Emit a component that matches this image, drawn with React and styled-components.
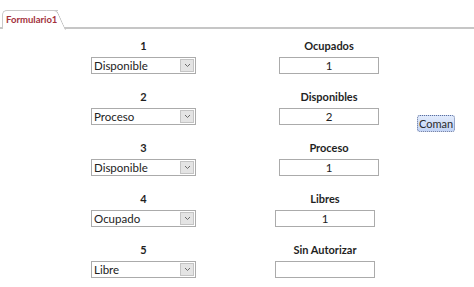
import styled, { createGlobalStyle } from "styled-components";

const GlobalStyle = createGlobalStyle`
  body {
    margin: 0;
    background: #ffffff;
    font-family: Lato, "Liberation Sans", sans-serif;
  }
`;

const Page = styled.div`
  width: 474px;
  height: 287px;
  overflow: hidden;
  background: #fff;
`;

const TabBar = styled.div`
  height: 27px;
  border-bottom: 2px solid #c6c6c6;
  display: flex;
  align-items: flex-end;
  padding-left: 2px;
`;

const Tab = styled.div`
  position: relative;
  height: 18px;
  padding: 0 1px 0 3px;
  margin-bottom: -2px;
  border: 1px solid #c9c9c9;
  border-right: none;
  border-bottom: none;
  border-top-left-radius: 5px;
  background: #fff;
  font-size: 9.5px;
  font-weight: 700;
  color: #a3313c;
  line-height: 18px;

  &::after {
    content: "";
    position: absolute;
    top: -1px;
    right: -8px;
    width: 10px;
    height: 19px;
    border-top: 1px solid #c9c9c9;
    border-right: 1px solid #b9b9b9;
    border-top-right-radius: 4px;
    transform: skewX(24deg);
    transform-origin: bottom left;
    background: #fff;
    z-index: 0;
  }
`;

const TabText = styled.span`
  position: relative;
  z-index: 1;
`;

const Body = styled.div`
  display: flex;
  padding: 10px 0 0 91px;
`;

const Column = styled.div`
  display: flex;
  flex-direction: column;
  width: ${(p) => p.$width}px;
  margin-left: ${(p) => p.$offset || 0}px;
`;

const Field = styled.div`
  display: flex;
  flex-direction: column;
  height: 51px;
  transform: translateX(${(p) => p.$shift || 0}px);
`;

const Label = styled.div`
  height: 14px;
  line-height: 14px;
  margin-bottom: 4px;
  text-align: center;
  font-size: 11px;
  font-weight: 700;
  color: #1f1f1f;
`;

const SelectBox = styled.div`
  display: flex;
  height: 17px;
  border: 1px solid #ababab;
  box-sizing: border-box;
  background: #fff;
`;

const SelectText = styled.div`
  flex: 1;
  padding-left: 2px;
  font-size: 11.5px;
  line-height: 15px;
  color: #222;
`;

const DropButton = styled.div`
  width: 12px;
  margin: 1px;
  background: #e4e4e4;
  border: 1px solid #c4c4c4;
  display: flex;
  align-items: center;
  justify-content: center;
`;

const InputBox = styled.div`
  height: 17px;
  border: 1px solid #ababab;
  box-sizing: border-box;
  text-align: center;
  font-size: 11.5px;
  line-height: 15px;
  color: #222;
  background: #fff;
`;

const Side = styled.div`
  padding-top: 76px;
  margin-left: 38px;
`;

const Button = styled.div`
  height: 17px;
  padding: 0 1px;
  box-sizing: border-box;
  border: 1px dotted #5f6f99;
  border-radius: 3px;
  background: linear-gradient(#e2ebfc, #c3d5f6);
  font-size: 11px;
  line-height: 15px;
  text-align: center;
  color: #2a2a2a;
`;

const Chevron = () => (
  <svg width="7" height="5" viewBox="0 0 7 5">
    <path d="M1 1 L3.5 3.5 L6 1" fill="none" stroke="#6b6b6b" strokeWidth="1" />
  </svg>
);

const selects = [
  { n: "1", v: "Disponible" },
  { n: "2", v: "Proceso" },
  { n: "3", v: "Disponible" },
  { n: "4", v: "Ocupado" },
  { n: "5", v: "Libre" },
];

const totals = [
  { label: "Ocupados", value: "1", shift: 0 },
  { label: "Disponibles", value: "2", shift: 0 },
  { label: "Proceso", value: "1", shift: 0 },
  { label: "Libres", value: "1", shift: -4 },
  { label: "Sin Autorizar", value: "", shift: -4 },
];

export default function App() {
  return (
    <Page>
      <GlobalStyle />
      <TabBar>
        <Tab>
          <TabText>Formulario1</TabText>
        </Tab>
      </TabBar>
      <Body>
        <Column $width={105}>
          {selects.map((s) => (
            <Field key={s.n}>
              <Label>{s.n}</Label>
              <SelectBox>
                <SelectText>{s.v}</SelectText>
                <DropButton>
                  <Chevron />
                </DropButton>
              </SelectBox>
            </Field>
          ))}
        </Column>
        <Column $width={100} $offset={83}>
          {totals.map((t) => (
            <Field key={t.label} $shift={t.shift}>
              <Label>{t.label}</Label>
              <InputBox>{t.value}</InputBox>
            </Field>
          ))}
        </Column>
        <Side>
          <Button>Coman</Button>
        </Side>
      </Body>
    </Page>
  );
}
